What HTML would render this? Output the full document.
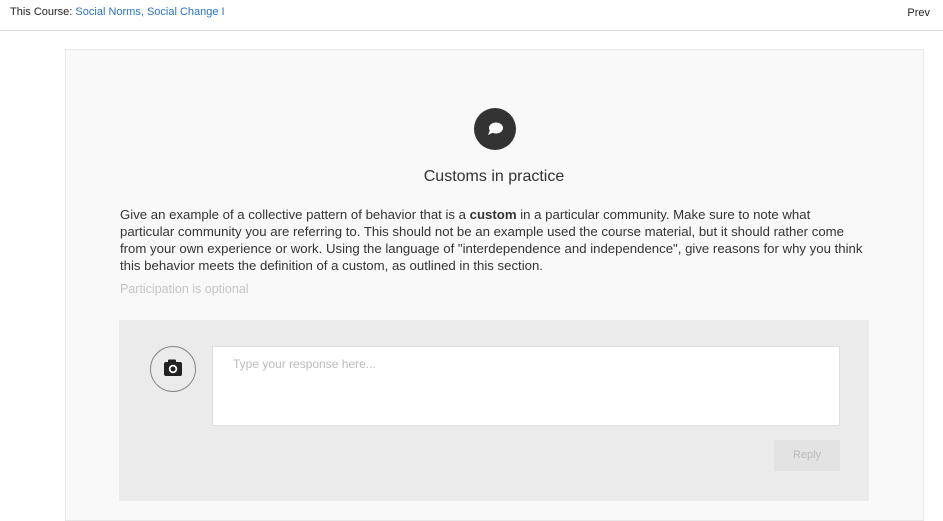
<!DOCTYPE html>
<html><head><style>
body{margin:0;width:943px;height:510px;overflow:hidden;background:#fff;font-family:"Liberation Sans",sans-serif;position:relative}
.top{position:absolute;left:0;top:0;width:943px;height:30px;border-bottom:1px solid #ddd}
.top .l{position:absolute;left:10px;top:6px;font-size:11px;color:#222}
.top .l a{color:#2a73c2;text-decoration:none}
.top .r{position:absolute;right:13px;top:7px;font-size:11px;color:#222}
.panel{position:absolute;left:65px;top:49px;width:857px;height:470px;background:#f9f9f9;border:1px solid #e8e8e8}
.icon{position:absolute;left:474px;top:108px;width:42px;height:42px;border-radius:50%;background:#333}
h2{position:absolute;left:0;width:988px;top:168px;margin:0;text-align:center;font-weight:normal;font-size:16px;color:#333}
.txt{position:absolute;left:120px;top:206px;width:790px;white-space:nowrap;font-size:13.2px;line-height:17px;color:#333}
.opt{position:absolute;left:120px;top:282px;font-size:12.5px;color:#c4c4c4}
.box{position:absolute;left:119px;top:320px;width:750px;height:181px;background:#ebebeb}
.cam{position:absolute;left:150px;top:346px;width:44px;height:44px;border:1px solid #888;border-radius:50%}
.ta{position:absolute;left:212px;top:346px;width:626px;height:78px;background:#fff;border:1px solid #ddd}
.ta span{position:absolute;left:20px;top:10px;font-size:12px;color:#bbb}
.btn{position:absolute;left:774px;top:440px;width:66px;height:31px;background:#e3e3e3;color:#bbb;font-size:11px;text-align:center;line-height:31px}
</style></head><body>
<div class="top"><div class="l">This Course: <a>Social Norms, Social Change I</a></div><div class="r">Prev</div></div>
<div class="panel"></div>
<div class="icon"><svg width="42" height="42" viewBox="0 0 42 42"><ellipse cx="22" cy="20" rx="7" ry="5.5" fill="#fff"/><path d="M16 22 L14 27 L20 24 Z" fill="#fff"/></svg></div>
<h2>Customs in practice</h2>
<div class="txt">Give an example of a collective pattern of behavior that is a <b>custom</b> in a particular community. Make sure to note what<br>particular community you are referring to. This should not be an example used the course material, but it should rather come<br>from your own experience or work. Using the language of "interdependence and independence", give reasons for why you think<br>this behavior meets the definition of a custom, as outlined in this section.</div>
<div class="opt">Participation is optional</div>
<div class="box"></div>
<div class="cam"><svg width="44" height="44" viewBox="0 0 44 44"><rect x="13" y="15" width="18" height="14" rx="2" fill="#222"/><rect x="17" y="12.5" width="8" height="4" rx="1" fill="#222"/><circle cx="22" cy="22" r="4.2" fill="#fff"/><circle cx="22" cy="22" r="2.5" fill="#222"/></svg></div>
<div class="ta"><span>Type your response here...</span></div>
<div class="btn">Reply</div>
</body></html>
